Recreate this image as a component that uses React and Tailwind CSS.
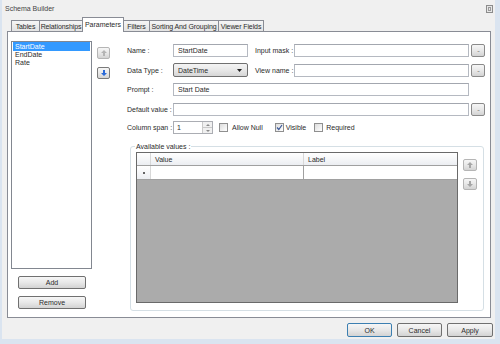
import React from 'react';

const tabs = [
  { name: 'Tables', w: 'w-[29px]' },
  { name: 'Relationships', w: 'w-[44px]' },
  { name: 'Parameters', w: 'w-[42px]', active: true },
  { name: 'Filters', w: 'w-[27px]' },
  { name: 'Sorting And Grouping', w: 'w-[70px]' },
  { name: 'Viewer Fields', w: 'w-[46px]' },
];

function Btn({ children, className = '' }) {
  return (
    <div
      className={`flex items-center justify-center rounded-[2px] border bg-linear-to-b from-[#f6f6f6] via-[#e8e8e8] to-[#d3d3d3] ${className}`}
    >
      {children}
    </div>
  );
}

function Arrow({ down = false, color }) {
  return (
    <svg width="6" height="6" viewBox="0 0 6 6" className={down ? 'rotate-180' : ''}>
      <path d="M3 0L6 3H4V6H2V3H0Z" fill={color} />
    </svg>
  );
}

function Field({ className = '', children }) {
  return (
    <div className={`flex h-[13px] items-center border border-[#b5b9c1] border-t-[#a3a7af] bg-white pl-[4px] ${className}`}>
      {children}
    </div>
  );
}

function Dots() {
  return (
    <Btn className="ml-[2px] h-[13px] w-[14px] border-[#8a8a8a]">
      <span className="-mt-[1px] text-[6px] tracking-[-1px] text-[#555]">...</span>
    </Btn>
  );
}

function Check({ checked = false }) {
  return (
    <div className="flex h-[9px] w-[9px] items-center justify-center border border-[#8f8f8f] bg-linear-to-br from-[#dcdcdc] to-white">
      {checked && (
        <svg width="7" height="7" viewBox="0 0 7 7">
          <path d="M1 3.5L2.8 5.5L6 1" stroke="#3d5a98" strokeWidth="1.2" fill="none" />
        </svg>
      )}
    </div>
  );
}

export default function App() {
  return (
    <div className="flex h-[344px] w-[500px] flex-col border-b-[5px] border-l-[2px] border-r-[5px] border-[#dae4f0] bg-[#f0f0f0] font-['Liberation_Sans',Arial,sans-serif] text-[7px] leading-none text-[#2b2b2b]">
      {/* title */}
      <div className="flex h-[17px] items-center justify-between pl-[3px] pr-[2px]">
        <span className="text-[#444]">Schema Builder</span>
        <div className="flex h-[8px] w-[7px] items-center justify-center border border-[#8c8c8c] bg-[#e6e6e6]">
          <div className="h-[4px] w-[3px] border border-[#9a9a9a]" />
        </div>
      </div>

      {/* tabs */}
      <div className="flex h-[14px] items-end pl-[9px]">
        {tabs.map((t, i) =>
          t.active ? (
            <div
              key={t.name}
              className={`relative z-10 -mb-px flex h-[15px] items-center justify-center border border-b-0 border-[#898c95] bg-white pb-[2px] ${t.w} ${i ? '-ml-px' : ''}`}
            >
              {t.name}
            </div>
          ) : (
            <div
              key={t.name}
              className={`flex h-[11px] items-center justify-center border border-b-0 border-[#898c95] bg-linear-to-b from-[#f5f5f5] to-[#e3e3e3] tracking-[-0.1px] ${t.w} ${i ? '-ml-px' : ''}`}
            >
              {t.name}
            </div>
          )
        )}
      </div>

      {/* panel */}
      <div className="ml-[5px] flex h-[287px] w-[484px] border border-[#898c95] bg-white">
        {/* left column */}
        <div className="ml-[3px] mt-[9px] flex flex-col">
          <div className="h-[228px] w-[81px] border border-[#828790] px-px">
            <div className="h-[9px] bg-[#3399ff] pl-[2px] leading-[9px] text-white">StartDate</div>
            <div className="h-[8px] pl-[2px] leading-[8px]">EndDate</div>
            <div className="h-[8px] pl-[2px] leading-[8px]">Rate</div>
          </div>
          <Btn className="ml-[7px] mt-[7px] h-[13px] w-[68px] border-[#707070]">Add</Btn>
          <Btn className="ml-[7px] mt-[7px] h-[13px] w-[68px] border-[#707070]">Remove</Btn>
        </div>

        {/* arrows */}
        <div className="ml-[5px] mt-[15px] flex flex-col gap-[8px]">
          <Btn className="h-[12px] w-[13px] border-[#b5b5b5]">
            <Arrow color="#b4b4b4" />
          </Btn>
          <Btn className="h-[12px] w-[13px] border-[#7a7a7a]">
            <Arrow down color="#2a6ad8" />
          </Btn>
        </div>

        {/* form */}
        <div className="ml-[17px] mt-[12px] flex flex-col">
          <div className="flex h-[13px] items-center">
            <span className="w-[46px]">Name :</span>
            <Field className="w-[75px]">StartDate</Field>
            <span className="ml-[7px] w-[39px]">Input mask :</span>
            <Field className="w-[175px]" />
            <Dots />
          </div>
          <div className="mt-[6px] flex h-[14px] items-center">
            <span className="w-[46px]">Data Type :</span>
            <div className="flex h-[14px] w-[75px] items-center justify-between rounded-[2px] border border-[#707070] bg-linear-to-b from-[#f4f4f4] via-[#e8e8e8] to-[#d6d6d6] pl-[4px] pr-[5px]">
              <span>DateTime</span>
              <svg width="5" height="3" viewBox="0 0 5 3">
                <path d="M0 0H5L2.5 3Z" fill="#222" />
              </svg>
            </div>
            <span className="ml-[7px] w-[39px]">View name :</span>
            <Field className="w-[175px]" />
            <Dots />
          </div>
          <div className="mt-[6px] flex h-[13px] items-center">
            <span className="w-[46px]">Prompt :</span>
            <Field className="w-[296px]">Start Date</Field>
          </div>
          <div className="mt-[7px] flex h-[13px] items-center">
            <span className="w-[46px]">Default value :</span>
            <Field className="w-[296px]" />
            <Dots />
          </div>
          <div className="mt-[5px] flex h-[13px] items-center">
            <span className="w-[46px]">Column span :</span>
            <div className="flex h-[13px] w-[40px] border border-[#abadb3] bg-white">
              <div className="flex flex-1 items-center pl-[3px]">1</div>
              <div className="flex w-[10px] flex-col border-l border-[#c9c9c9]">
                <div className="flex flex-1 items-center justify-center border-b border-[#c9c9c9] bg-[#f0f0f0]">
                  <svg width="4" height="2" viewBox="0 0 4 2"><path d="M0 2H4L2 0Z" fill="#8a8a8a" /></svg>
                </div>
                <div className="flex flex-1 items-center justify-center bg-[#f0f0f0]">
                  <svg width="4" height="2" viewBox="0 0 4 2"><path d="M0 0H4L2 2Z" fill="#8a8a8a" /></svg>
                </div>
              </div>
            </div>
            <div className="ml-[6px]"><Check /></div>
            <span className="ml-[4px]">Allow Null</span>
            <div className="ml-[12px]"><Check checked /></div>
            <span className="ml-[2px]">Visible</span>
            <div className="ml-[8px]"><Check /></div>
            <span className="ml-[3px]">Required</span>
          </div>

          {/* available values */}
          <div className="relative ml-[3px] mt-[12px] flex h-[165px] w-[354px] rounded-[3px] border border-[#d5dfe5]">
            <span className="absolute -top-[4px] left-[4px] bg-white px-px">Available values :</span>
            <div className="ml-[5px] mt-[5px] flex h-[151px] w-[322px] flex-col border border-[#6a6a6a] bg-[#ababab]">
              <div className="flex h-[13px] border-b border-[#a0a0a0] bg-linear-to-b from-white to-[#eceef2]">
                <div className="w-[14px] border-r border-[#d8d8d8]" />
                <div className="flex w-[153px] items-center border-r border-[#d8d8d8] pl-[4px]">Value</div>
                <div className="flex flex-1 items-center pl-[4px]">Label</div>
              </div>
              <div className="flex h-[14px] border-b border-[#a0a0a0] bg-white">
                <div className="flex w-[14px] items-center justify-center border-r border-[#d8d8d8] bg-linear-to-b from-white to-[#eceef2]">
                  <div className="h-[2px] w-[2px] rounded-full bg-[#333]" />
                </div>
                <div className="w-[153px] border-r border-[#a0a0a0]" />
                <div className="flex-1" />
              </div>
            </div>
            <div className="ml-[5px] mt-[12px] flex flex-col gap-[7px]">
              <Btn className="h-[12px] w-[14px] border-[#b5b5b5]">
                <Arrow color="#a6a6a6" />
              </Btn>
              <Btn className="h-[12px] w-[14px] border-[#b5b5b5]">
                <Arrow down color="#a6a6a6" />
              </Btn>
            </div>
          </div>
        </div>
      </div>

      {/* bottom buttons */}
      <div className="mt-[5px] flex justify-end gap-[5px] pr-[2px]">
        <Btn className="h-[14px] w-[45px] border-[#3c7fb1]">OK</Btn>
        <Btn className="h-[14px] w-[45px] border-[#707070]">Cancel</Btn>
        <Btn className="h-[14px] w-[46px] border-[#707070]">Apply</Btn>
      </div>
    </div>
  );
}
